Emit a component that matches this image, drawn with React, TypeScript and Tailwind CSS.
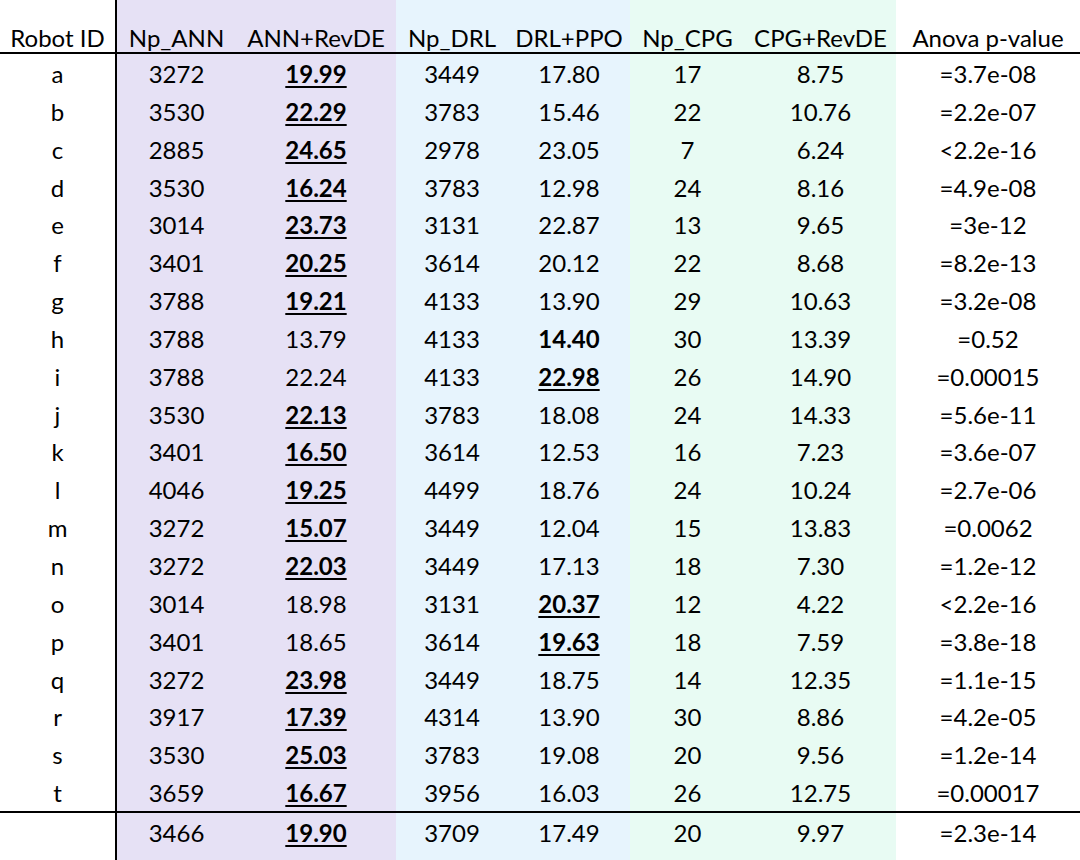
const headers = ["Robot ID", "Np_ANN", "ANN+RevDE", "Np_DRL", "DRL+PPO", "Np_CPG", "CPG+RevDE", "Anova p-value"];

// b = bold + underline, B = bold only
const rows: string[][] = [
  ["a", "3272", "b:19.99", "3449", "17.80", "17", "8.75", "=3.7e-08"],
  ["b", "3530", "b:22.29", "3783", "15.46", "22", "10.76", "=2.2e-07"],
  ["c", "2885", "b:24.65", "2978", "23.05", "7", "6.24", "<2.2e-16"],
  ["d", "3530", "b:16.24", "3783", "12.98", "24", "8.16", "=4.9e-08"],
  ["e", "3014", "b:23.73", "3131", "22.87", "13", "9.65", "=3e-12"],
  ["f", "3401", "b:20.25", "3614", "20.12", "22", "8.68", "=8.2e-13"],
  ["g", "3788", "b:19.21", "4133", "13.90", "29", "10.63", "=3.2e-08"],
  ["h", "3788", "13.79", "4133", "B:14.40", "30", "13.39", "=0.52"],
  ["i", "3788", "22.24", "4133", "b:22.98", "26", "14.90", "=0.00015"],
  ["j", "3530", "b:22.13", "3783", "18.08", "24", "14.33", "=5.6e-11"],
  ["k", "3401", "b:16.50", "3614", "12.53", "16", "7.23", "=3.6e-07"],
  ["l", "4046", "b:19.25", "4499", "18.76", "24", "10.24", "=2.7e-06"],
  ["m", "3272", "b:15.07", "3449", "12.04", "15", "13.83", "=0.0062"],
  ["n", "3272", "b:22.03", "3449", "17.13", "18", "7.30", "=1.2e-12"],
  ["o", "3014", "18.98", "3131", "b:20.37", "12", "4.22", "<2.2e-16"],
  ["p", "3401", "18.65", "3614", "b:19.63", "18", "7.59", "=3.8e-18"],
  ["q", "3272", "b:23.98", "3449", "18.75", "14", "12.35", "=1.1e-15"],
  ["r", "3917", "b:17.39", "4314", "13.90", "30", "8.86", "=4.2e-05"],
  ["s", "3530", "b:25.03", "3783", "19.08", "20", "9.56", "=1.2e-14"],
  ["t", "3659", "b:16.67", "3956", "16.03", "26", "12.75", "=0.00017"],
];
const summary = ["", "3466", "b:19.90", "3709", "17.49", "20", "9.97", "=2.3e-14"];

const cols = [
  "w-[117px] border-r-2 border-black bg-white",
  "w-[119px] bg-[#e6e1f5]",
  "w-[160px] bg-[#e6e1f5]",
  "w-[112px] bg-[#e7f4fd]",
  "w-[122px] bg-[#e7f4fd]",
  "w-[115px] bg-[#e8fbf3]",
  "w-[151px] bg-[#e8fbf3]",
  "w-[184px] bg-white",
];

function Value({ v }: { v: string }) {
  if (v.startsWith("b:"))
    return <span className="font-bold underline decoration-2 underline-offset-[3px]">{v.slice(2)}</span>;
  if (v.startsWith("B:")) return <span className="font-bold">{v.slice(2)}</span>;
  return <span>{v}</span>;
}

export default function App() {
  return (
    <div className="flex h-[860px] w-[1080px] overflow-hidden bg-white text-[24px] text-black" style={{ fontFamily: "Lato, 'Liberation Sans', sans-serif" }}>
      {headers.map((h, c) => (
        <div key={h} className={`flex shrink-0 flex-col ${cols[c]}`}>
          <div className="h-[54px] whitespace-nowrap border-b-2 border-black pt-[24px] text-center leading-[28px]">{h}</div>
          {rows.map((r) => (
            <div key={r[0]} className="h-[37.85px] pt-px text-center leading-[37px]">
              <Value v={r[c]} />
            </div>
          ))}
          <div className="h-[40px] border-t-2 border-black pt-px text-center leading-[37px]">
            <Value v={summary[c]} />
          </div>
        </div>
      ))}
    </div>
  );
}
